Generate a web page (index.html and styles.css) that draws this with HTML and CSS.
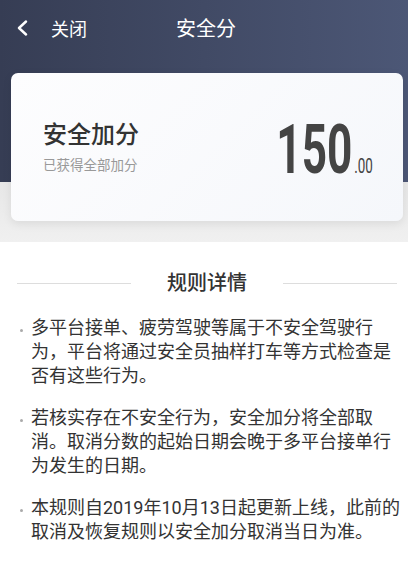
FILE: index.html
```html
<!DOCTYPE html>
<html lang="zh-CN">
<head>
    <meta charset="UTF-8">
    <meta name="viewport" content="width=device-width, initial-scale=1.0">
    <title>安全分</title>
    <link rel="stylesheet" href="styles.css">
</head>
<body>
<div class="top">
    <div class="nav-bar">
        <div class="nav-left">
            <svg class="back-icon" width="12" height="16" viewBox="0 0 12 16">
                <polyline points="10,1.5 3,8 10,14.5" fill="none" stroke="#fff" stroke-width="2.4" stroke-linecap="round" stroke-linejoin="round"/>
            </svg>
            <span class="close-text">关闭</span>
        </div>
        <div class="nav-title">安全分</div>
        <div class="nav-right"></div>
    </div>

    <div class="score-card">
        <div class="score-info">
            <div class="score-name">安全加分</div>
            <div class="score-desc">已获得全部加分</div>
        </div>
        <div class="score-value"><span class="score-int">150</span><span class="score-dec">.00</span></div>
    </div>
</div>

<div class="rules">
    <div class="rules-title">
        <span class="line"></span>
        <h2>规则详情</h2>
        <span class="line"></span>
    </div>
    <ul class="rule-list">
        <li>多平台接单、疲劳驾驶等属于不安全驾驶行为，平台将通过安全员抽样打车等方式检查是否有这些行为。</li>
        <li>若核实存在不安全行为，安全加分将全部取消。取消分数的起始日期会晚于多平台接单行为发生的日期。</li>
        <li>本规则自2019年10月13日起更新上线，此前的取消及恢复规则以安全加分取消当日为准。</li>
    </ul>
</div>
</body>
</html>
```

FILE: styles.css
```css
body {
    margin: 0;
    font-family: Roboto, "Noto Sans CJK SC", sans-serif;
    background-color: #fff;
    color: #333;
    text-spacing-trim: space-all;
}

.top {
    height: 242px;
    padding: 0 5px 0 11px;
    background:
        linear-gradient(90deg, #363d54, #4c5776) 0 0 / 100% 182px no-repeat,
        linear-gradient(#e7e7e7, #f0f0f0) 0 182px / 100% 60px no-repeat;
}

.nav-bar {
    height: 55px;
    display: grid;
    grid-template-columns: 1fr auto 1fr;
    align-items: center;
    color: #fff;
}

.nav-left {
    display: flex;
    align-items: center;
    padding-left: 5px;
}

.back-icon {
    display: block;
}

.close-text {
    font-size: 18px;
    margin-left: 23px;
}

.nav-title {
    font-size: 20px;
    padding-right: 2px;
}

.score-card {
    margin-top: 18px;
    height: 148px;
    box-sizing: border-box;
    padding: 0 30px 0 32px;
    display: flex;
    align-items: center;
    justify-content: space-between;
    background: linear-gradient(135deg, #fdfdfe, #f5f7fb);
    border-radius: 7px;
    box-shadow: 0 3px 10px rgba(0, 0, 0, 0.08);
}

.score-name {
    font-size: 24px;
    font-weight: 500;
    line-height: 30px;
    color: #333;
}

.score-desc {
    font-size: 13.5px;
    line-height: 18px;
    margin-top: 6px;
    color: #999;
}

.score-value {
    font-family: Roboto, sans-serif;
    font-weight: 700;
    color: #444;
    transform: scaleX(0.64);
    transform-origin: right center;
    white-space: nowrap;
    margin-top: 5px;
}

.score-int {
    font-size: 69px;
}

.score-dec {
    font-size: 21px;
    font-weight: 400;
    margin-left: 3px;
}

.rules {
    padding: 27px 5px 20px 17px;
}

.rules-title {
    display: flex;
    align-items: center;
    margin-right: 6px;
}

.rules-title .line {
    flex: 1;
    height: 1px;
    background-color: #ddd;
}

.rules-title h2 {
    margin: 0 36px;
    font-size: 20px;
    font-weight: 500;
    line-height: 28px;
    color: #333;
}

.rule-list {
    list-style: none;
    margin: 19px 0 0;
    padding: 0 0 0 14px;
}

.rule-list li {
    position: relative;
    font-size: 18px;
    line-height: 24px;
    margin-bottom: 18px;
    color: #333;
}

.rule-list li::before {
    content: "";
    position: absolute;
    left: -11px;
    top: 13px;
    width: 3px;
    height: 3px;
    border-radius: 50%;
    background-color: #aaa;
}
```
